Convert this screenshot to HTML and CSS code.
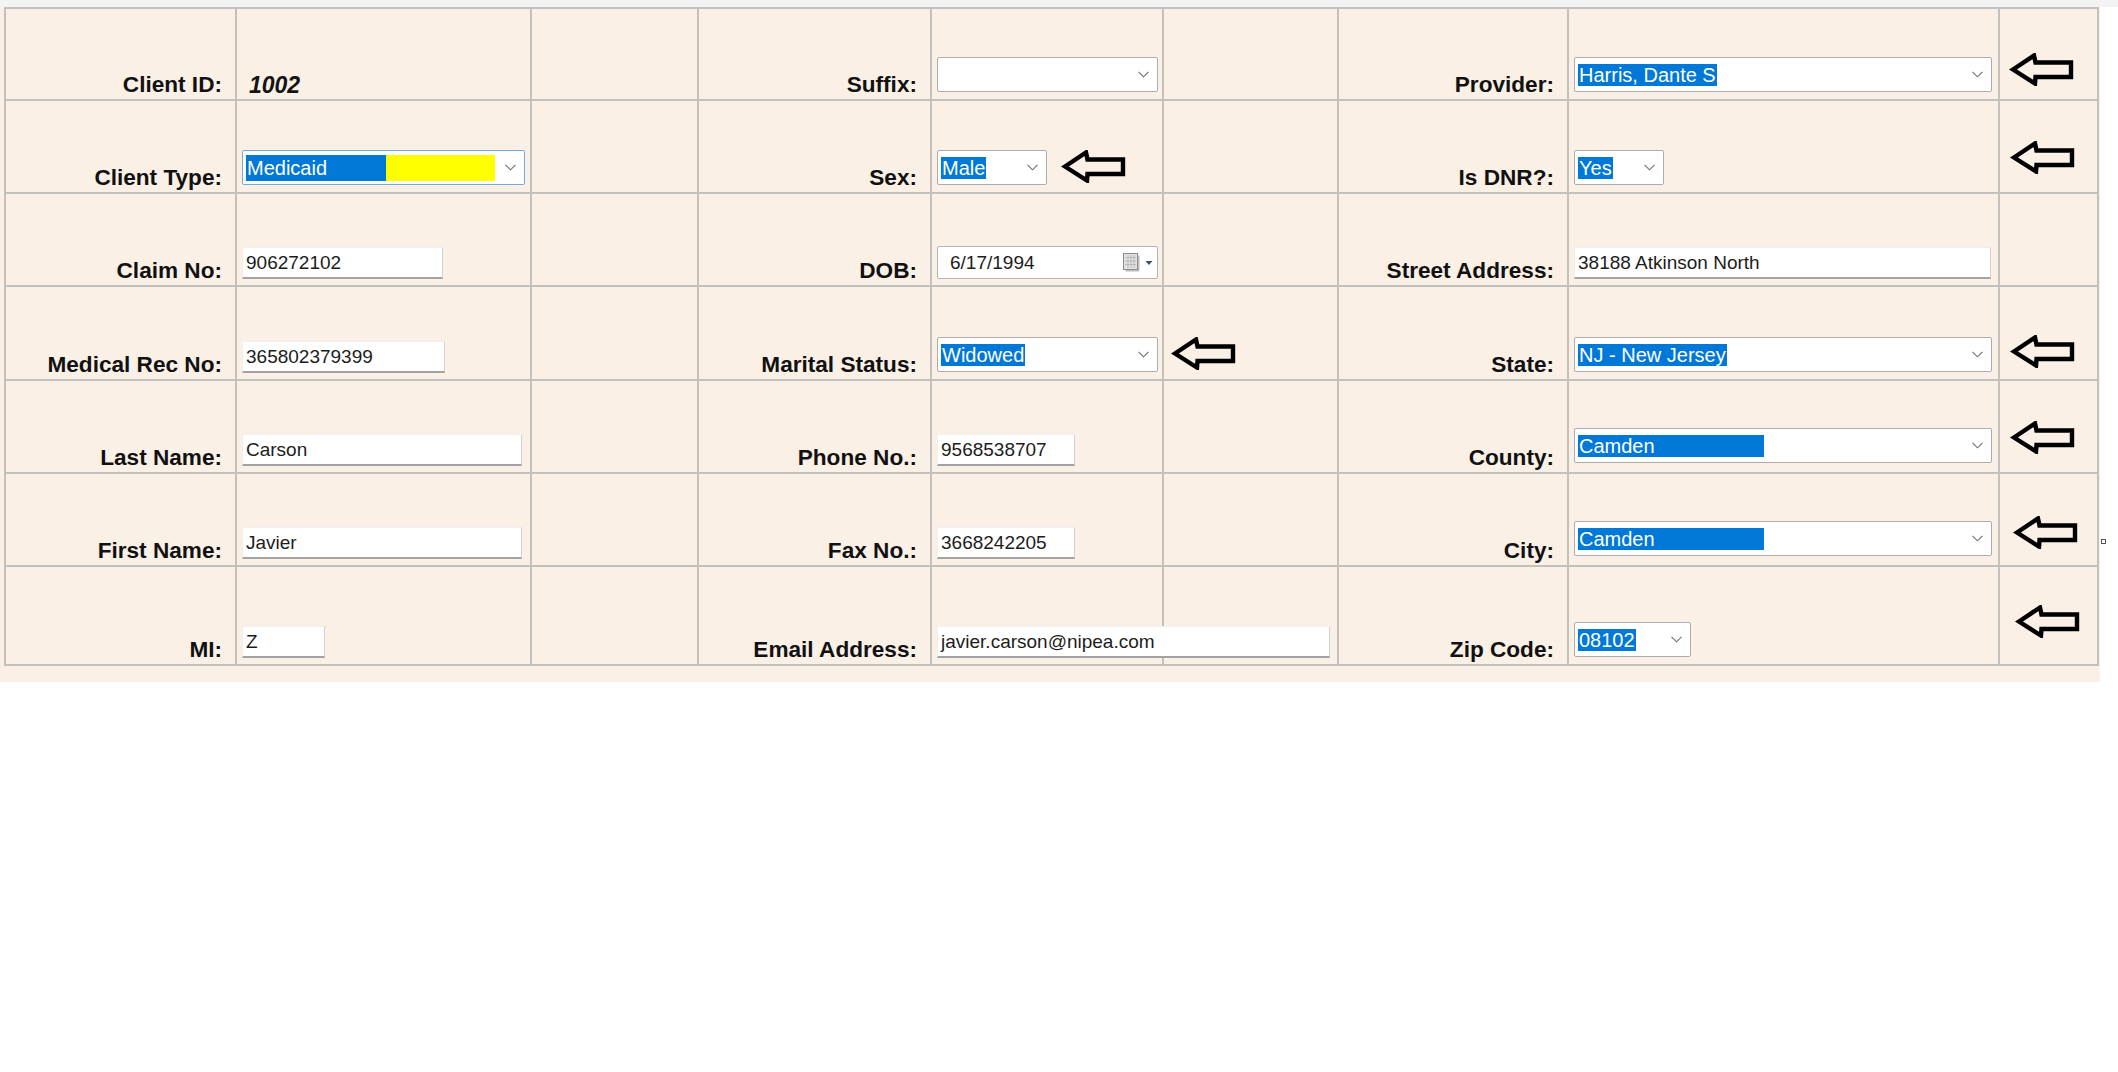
FILE: index.html
```html
<!DOCTYPE html>
<html>
<head>
<meta charset="utf-8">
<title>Client</title>
<link rel="stylesheet" href="styles.css">
</head>
<body>
<div class="page">
  <div class="topband"></div>
  <div class="panel">
    <table class="grid">
      <colgroup>
        <col class="c1"><col class="c2"><col class="c3"><col class="c4"><col class="c5"><col class="c6"><col class="c7"><col class="c8"><col class="c9">
      </colgroup>
      <tr class="h92">
        <td class="lbl">Client ID:</td>
        <td class="val">1002</td>
        <td></td>
        <td class="lbl">Suffix:</td>
        <td class="fld"><div class="combo w221"><svg class="chev" viewBox="0 0 11 7"><path d="M0.5 0.8 L5.5 5.8 L10.5 0.8" fill="none" stroke="#6e6e6e" stroke-width="1.1"/></svg></div></td>
        <td></td>
        <td class="lbl">Provider:</td>
        <td class="fld"><div class="combo w418"><span class="hl">Harris, Dante S</span><svg class="chev" viewBox="0 0 11 7"><path d="M0.5 0.8 L5.5 5.8 L10.5 0.8" fill="none" stroke="#6e6e6e" stroke-width="1.1"/></svg></div></td>
        <td></td>
      </tr>
      <tr class="h93">
        <td class="lbl">Client Type:</td>
        <td class="fld"><div class="combo focus w283"><span class="hl big w140">Medicaid</span><span class="yellow"></span><svg class="chev" viewBox="0 0 11 7"><path d="M0.5 0.8 L5.5 5.8 L10.5 0.8" fill="none" stroke="#6e6e6e" stroke-width="1.1"/></svg></div></td>
        <td></td>
        <td class="lbl">Sex:</td>
        <td class="fld"><div class="combo w110"><span class="hl">Male</span><svg class="chev" viewBox="0 0 11 7"><path d="M0.5 0.8 L5.5 5.8 L10.5 0.8" fill="none" stroke="#6e6e6e" stroke-width="1.1"/></svg></div></td>
        <td></td>
        <td class="lbl">Is DNR?:</td>
        <td class="fld"><div class="combo w90"><span class="hl">Yes</span><svg class="chev" viewBox="0 0 11 7"><path d="M0.5 0.8 L5.5 5.8 L10.5 0.8" fill="none" stroke="#6e6e6e" stroke-width="1.1"/></svg></div></td>
        <td></td>
      </tr>
      <tr class="h93">
        <td class="lbl">Claim No:</td>
        <td class="fld"><div class="tb w201">906272102</div></td>
        <td></td>
        <td class="lbl">DOB:</td>
        <td class="fld"><div class="date w221"><span class="dtext">6/17/1994</span><svg class="cal" viewBox="0 0 31 20"><rect x="2.5" y="2.5" width="14" height="16" fill="#bdbdbd"/><rect x="0.5" y="0.5" width="14" height="16" fill="#e2e2e2" stroke="#8a8a8a"/><path d="M2 4.5H13M2 8H13M2 11.5H13M5 2V15M8 2V15M11 2V15" stroke="#b2b2b2" stroke-width="0.8"/><polygon points="22.5,8 29.5,8 26,12" fill="#3f5068"/></svg></div></td>
        <td></td>
        <td class="lbl">Street Address:</td>
        <td class="fld"><div class="tb w417">38188 Atkinson North</div></td>
        <td></td>
      </tr>
      <tr class="h94">
        <td class="lbl">Medical Rec No:</td>
        <td class="fld"><div class="tb w203">365802379399</div></td>
        <td></td>
        <td class="lbl">Marital Status:</td>
        <td class="fld"><div class="combo w221"><span class="hl">Widowed</span><svg class="chev" viewBox="0 0 11 7"><path d="M0.5 0.8 L5.5 5.8 L10.5 0.8" fill="none" stroke="#6e6e6e" stroke-width="1.1"/></svg></div></td>
        <td></td>
        <td class="lbl">State:</td>
        <td class="fld"><div class="combo w418"><span class="hl">NJ - New Jersey</span><svg class="chev" viewBox="0 0 11 7"><path d="M0.5 0.8 L5.5 5.8 L10.5 0.8" fill="none" stroke="#6e6e6e" stroke-width="1.1"/></svg></div></td>
        <td></td>
      </tr>
      <tr class="h93">
        <td class="lbl">Last Name:</td>
        <td class="fld"><div class="tb w280">Carson</div></td>
        <td></td>
        <td class="lbl">Phone No.:</td>
        <td class="fld"><div class="tb w138">9568538707</div></td>
        <td></td>
        <td class="lbl">County:</td>
        <td class="fld lift"><div class="combo w418"><span class="hl w186">Camden</span><svg class="chev" viewBox="0 0 11 7"><path d="M0.5 0.8 L5.5 5.8 L10.5 0.8" fill="none" stroke="#6e6e6e" stroke-width="1.1"/></svg></div></td>
        <td></td>
      </tr>
      <tr class="h93">
        <td class="lbl">First Name:</td>
        <td class="fld"><div class="tb w280">Javier</div></td>
        <td></td>
        <td class="lbl">Fax No.:</td>
        <td class="fld"><div class="tb w138">3668242205</div></td>
        <td></td>
        <td class="lbl">City:</td>
        <td class="fld lift"><div class="combo w418"><span class="hl w186">Camden</span><svg class="chev" viewBox="0 0 11 7"><path d="M0.5 0.8 L5.5 5.8 L10.5 0.8" fill="none" stroke="#6e6e6e" stroke-width="1.1"/></svg></div></td>
        <td></td>
      </tr>
      <tr class="h99">
        <td class="lbl">MI:</td>
        <td class="fld"><div class="tb w83">Z</div></td>
        <td></td>
        <td class="lbl">Email Address:</td>
        <td class="fld"><div class="tb w393">javier.carson@nipea.com</div></td>
        <td></td>
        <td class="lbl">Zip Code:</td>
        <td class="fld"><div class="combo w117"><span class="hl">08102</span><svg class="chev" viewBox="0 0 11 7"><path d="M0.5 0.8 L5.5 5.8 L10.5 0.8" fill="none" stroke="#6e6e6e" stroke-width="1.1"/></svg></div></td>
        <td></td>
      </tr>
    </table>
  </div>

  <svg class="arrow a1" viewBox="0 0 66 33"><path d="M5 16.5 L26 2.5 L27.5 9.5 L63 9.5 L63 24 L27.5 24 L27 30.5 Z" fill="none" stroke="#000" stroke-width="4.4"/></svg>
  <svg class="arrow a2" viewBox="0 0 66 33"><path d="M5 16.5 L26 2.5 L27.5 9.5 L63 9.5 L63 24 L27.5 24 L27 30.5 Z" fill="none" stroke="#000" stroke-width="4.4"/></svg>
  <svg class="arrow a3" viewBox="0 0 66 33"><path d="M5 16.5 L26 2.5 L27.5 9.5 L63 9.5 L63 24 L27.5 24 L27 30.5 Z" fill="none" stroke="#000" stroke-width="4.4"/></svg>
  <svg class="arrow a4" viewBox="0 0 66 33"><path d="M5 16.5 L26 2.5 L27.5 9.5 L63 9.5 L63 24 L27.5 24 L27 30.5 Z" fill="none" stroke="#000" stroke-width="4.4"/></svg>
  <svg class="arrow a5" viewBox="0 0 66 33"><path d="M5 16.5 L26 2.5 L27.5 9.5 L63 9.5 L63 24 L27.5 24 L27 30.5 Z" fill="none" stroke="#000" stroke-width="4.4"/></svg>
  <svg class="arrow a6" viewBox="0 0 66 33"><path d="M5 16.5 L26 2.5 L27.5 9.5 L63 9.5 L63 24 L27.5 24 L27 30.5 Z" fill="none" stroke="#000" stroke-width="4.4"/></svg>
  <svg class="arrow a7" viewBox="0 0 66 33"><path d="M5 16.5 L26 2.5 L27.5 9.5 L63 9.5 L63 24 L27.5 24 L27 30.5 Z" fill="none" stroke="#000" stroke-width="4.4"/></svg>
  <svg class="arrow a8" viewBox="0 0 66 33"><path d="M5 16.5 L26 2.5 L27.5 9.5 L63 9.5 L63 24 L27.5 24 L27 30.5 Z" fill="none" stroke="#000" stroke-width="4.4"/></svg>
  <div class="handle"></div>
</div>
</body>
</html>
```

FILE: styles.css
```css
* { box-sizing: border-box; }
html, body { margin: 0; padding: 0; background: #ffffff; }
body { font-family: "Liberation Sans", Arial, sans-serif; color: #111111; }

.page { position: relative; width: 2118px; height: 1072px; overflow: hidden; }
.topband { height: 7px; background: #f3f3f3; }
.panel { width: 2100px; background: #faf0e6; padding: 0 0 16px 4px; }

.grid { border-collapse: collapse; table-layout: fixed; width: 2095px; border: 2px solid #c3c1be; }
.grid td { border: 2px solid #c3c1be; padding: 0; vertical-align: bottom; overflow: visible; }

.c1 { width: 231px; }
.c2 { width: 295px; }
.c3 { width: 167px; }
.c4 { width: 233px; }
.c5 { width: 232px; }
.c6 { width: 175px; }
.c7 { width: 230px; }
.c8 { width: 431px; }
.c9 { width: 99px; }

.h92 { height: 92px; }
.h93 { height: 93px; }
.h94 { height: 94px; }
.h99 { height: 99px; }

.grid td.lbl {
  text-align: right;
  padding: 0 13px 2px 0;
  font-weight: bold;
  font-size: 22.6px;
  line-height: 24px;
  white-space: nowrap;
  color: #111111;
}
.grid td.val {
  padding: 0 0 2px 12px;
  font-weight: bold;
  font-style: italic;
  font-size: 23px;
  line-height: 24px;
  color: #141414;
}
.grid td.fld { padding: 0 0 6px 5px; }
.grid td.fld.lift { padding-bottom: 8px; }

.combo {
  display: flex;
  align-items: center;
  height: 35px;
  background: #ffffff;
  border: 1px solid #adadad;
  border-radius: 2px;
  padding-left: 3px;
  font-size: 20px;
  margin-bottom: 1px;
  white-space: nowrap;
}
.combo.focus { border-color: #74a9de; }
.hl {
  background: #0078d7;
  color: #ffffff;
  line-height: 22px;
  padding: 0 1px;
  white-space: nowrap;
  flex: none;
}
.hl.big { line-height: 26px; }
.hl.w140 { width: 140px; }
.hl.w186 { width: 186px; }
.yellow { width: 109px; height: 26px; background: #ffff00; flex: none; }
.chev { margin-left: auto; margin-right: 8px; width: 11px; height: 7px; flex: none; }

.tb {
  position: relative;
  z-index: 1;
  display: flex;
  align-items: center;
  height: 32px;
  background: #ffffff;
  border: 1px solid #efefef;
  border-right-color: #d2d2d2;
  border-bottom: 2px solid #a3a3a3;
  padding-left: 3px;
  font-size: 19px;
  color: #1c1c1c;
  white-space: nowrap;
}

.date {
  display: flex;
  align-items: center;
  height: 33px;
  background: #ffffff;
  border: 1px solid #b4b4b4;
  border-radius: 2px;
  font-size: 19px;
  color: #1c1c1c;
}
.dtext { padding-left: 12px; }
.cal { margin-left: auto; margin-right: 3px; width: 31px; height: 20px; flex: none; }

.w83 { width: 83px; }
.w90 { width: 90px; }
.w110 { width: 110px; }
.w117 { width: 117px; }
.w138 { width: 138px; }
.w201 { width: 201px; }
.w203 { width: 203px; }
.w221 { width: 221px; }
.w280 { width: 280px; }
.w283 { width: 283px; }
.w393 { width: 393px; }
.w417 { width: 417px; }
.w418 { width: 418px; }

.arrow { position: absolute; width: 66px; height: 33px; }
.a1 { left: 2008px; top: 53px; }
.a2 { left: 2009px; top: 141px; }
.a3 { left: 1060px; top: 150px; }
.a4 { left: 1170px; top: 337px; }
.a5 { left: 2009px; top: 335px; }
.a6 { left: 2009px; top: 421px; }
.a7 { left: 2012px; top: 516px; }
.a8 { left: 2014px; top: 605px; }

.handle { position: absolute; left: 2101px; top: 539px; width: 5px; height: 5px; border: 1px solid #555555; background: #ffffff; }
```
